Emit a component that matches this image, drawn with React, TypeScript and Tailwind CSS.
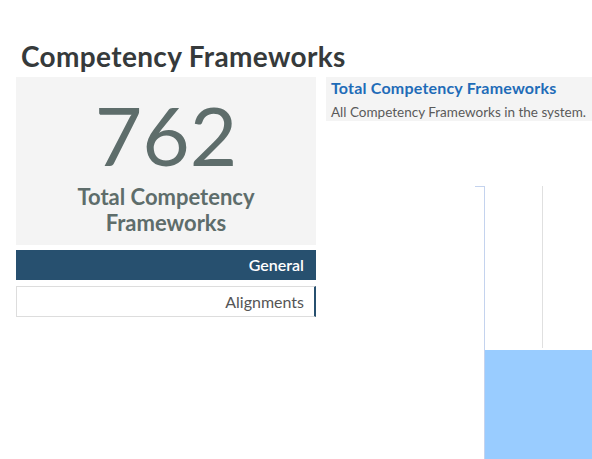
export default function App() {
  return (
    <div className="h-[459px] w-[592px] overflow-hidden bg-white font-['Lato',sans-serif]">
      <h1 className="pl-[21px] pt-[37px] text-[28px] font-bold leading-[38px] tracking-[0.35px] text-[#363a3b]">
        Competency Frameworks
      </h1>
      <div className="mt-[2px] flex gap-[10px] pl-4">
        <div className="w-[300px] shrink-0">
          <div className="flex h-[168px] flex-col items-center bg-[#f4f4f4] pt-[12px] text-[#5e6d6b]">
            <div className="text-[82px] leading-[90px]">762</div>
            <div className="mt-[5px] text-center text-[22px] font-bold leading-[26px]">
              Total Competency
              <br />
              Frameworks
            </div>
          </div>
          <div className="mt-[5px] flex h-[30px] items-center justify-end bg-[#27506f] pr-3 text-[16px] font-semibold text-white">
            General
          </div>
          <div className="mt-[6px] flex h-[31px] items-center justify-end border border-r-2 border-[#dddddd] border-r-[#27506f] pr-[10px] text-[16px] text-[#555555]">
            Alignments
          </div>
        </div>
        <div className="min-w-0 flex-1">
          <div className="h-[44px] bg-[#f4f4f4] pl-[5px] pt-[1px]">
            <div className="text-[16px] font-bold leading-[20px] tracking-[0.2px] text-[#1f6cb8]">
              Total Competency Frameworks
            </div>
            <div className="mt-[4px] text-[13.5px] leading-[20px] text-[#5a5a5a]">
              All Competency Frameworks in the system.
            </div>
          </div>
          <svg width="266" height="338" className="block">
            <line x1="149" y1="65.5" x2="158" y2="65.5" stroke="#c4d3ee" strokeWidth="1" />
            <line x1="158.5" y1="65" x2="158.5" y2="338" stroke="#c4d3ee" strokeWidth="1" />
            <line x1="216.5" y1="65" x2="216.5" y2="227" stroke="#e0e0e0" strokeWidth="1" />
            <rect x="159" y="229" width="107" height="109" fill="#99ccff" />
          </svg>
        </div>
      </div>
    </div>
  );
}
